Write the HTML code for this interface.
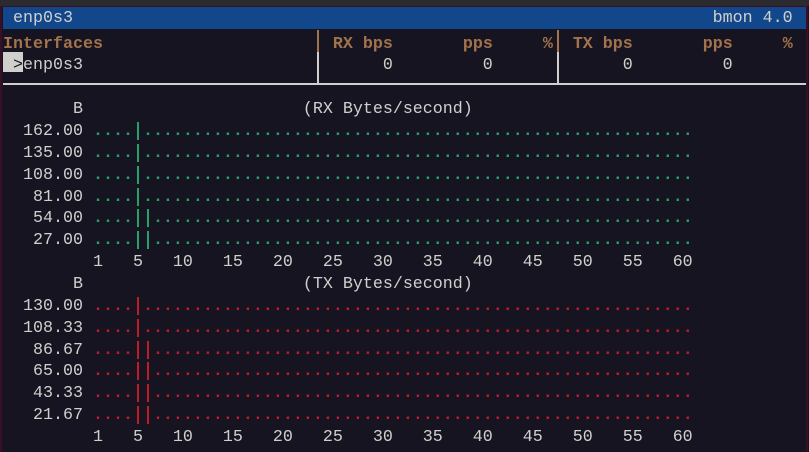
<!DOCTYPE html>
<html><head><meta charset="utf-8"><style>
html,body{margin:0;padding:0;}
body{width:809px;height:452px;background:#171421;position:relative;overflow:hidden;font-family:"Liberation Mono","DejaVu Sans Mono",monospace;font-size:16.67px;color:#d0cfcc;}
.top{position:absolute;left:0;top:0;width:809px;height:6px;background:#2b2a2e;}
.lb{position:absolute;left:0;top:6px;width:2px;height:446px;background:#3a0f25;}
.rb{position:absolute;left:806px;top:6px;width:2px;height:446px;background:#3a0f25;}
.tb{position:absolute;left:2px;top:6px;width:804px;height:1px;background:#3a0f25;}
.bar{position:absolute;left:3px;top:7px;width:803px;height:22px;background:#12488b;color:#d0cfcc;line-height:23px;white-space:pre;}
pre{position:absolute;left:3px;top:33.6px;margin:0;font:inherit;line-height:21.86px;white-space:pre;}
.o{color:#a2734c;font-weight:bold;}
.g{color:#26a269;font-weight:bold;}
.r{color:#c01c28;font-weight:bold;}
.sep{position:absolute;width:2px;}
.hl{position:absolute;left:3px;top:83px;width:803px;height:2px;background:#d0cfcc;}
.cur{position:absolute;left:3px;top:52px;width:20px;height:20px;background:#d0cfcc;}
.gb{position:absolute;width:2px;height:18px;background:#26a269;}
.rbar{position:absolute;width:2px;height:18px;background:#c01c28;}
</style></head><body>
<div class="top"></div><div class="tb"></div><div class="lb"></div><div class="rb"></div>
<div class="bar"> enp0s3                                                                bmon 4.0</div>
<div class="cur"></div>
<div class="sep" style="left:317px;top:30px;height:22px;background:#a2734c"></div>
<div class="sep" style="left:317px;top:52px;height:32px;background:#d0cfcc"></div>
<div class="sep" style="left:557px;top:30px;height:22px;background:#a2734c"></div>
<div class="sep" style="left:557px;top:52px;height:32px;background:#d0cfcc"></div>
<div class="hl"></div>
<pre><span class="o">Interfaces</span>                       <span class="o">RX bps</span>       <span class="o">pps</span>     <span class="o">%</span>  <span class="o">TX bps</span>       <span class="o">pps</span>     <span class="o">%</span>
 <span style="color:#171421">&gt;</span>enp0s3                              0         0             0         0

       B                      (RX Bytes/second)
  162.00 <span class="g">.... .......................................................</span>
  135.00 <span class="g">.... .......................................................</span>
  108.00 <span class="g">.... .......................................................</span>
   81.00 <span class="g">.... .......................................................</span>
   54.00 <span class="g">....  ......................................................</span>
   27.00 <span class="g">....  ......................................................</span>
         1   5   10   15   20   25   30   35   40   45   50   55   60
       B                      (TX Bytes/second)
  130.00 <span class="r">.... .......................................................</span>
  108.33 <span class="r">.... .......................................................</span>
   86.67 <span class="r">....  ......................................................</span>
   65.00 <span class="r">....  ......................................................</span>
   43.33 <span class="r">....  ......................................................</span>
   21.67 <span class="r">....  ......................................................</span>
         1   5   10   15   20   25   30   35   40   45   50   55   60
</pre>
<div class="gb" style="left:137px;top:122px"></div>
<div class="gb" style="left:137px;top:143.9px"></div>
<div class="gb" style="left:137px;top:165.7px"></div>
<div class="gb" style="left:137px;top:187.6px"></div>
<div class="gb" style="left:137px;top:209.4px"></div>
<div class="gb" style="left:147px;top:209.4px"></div>
<div class="gb" style="left:137px;top:231.3px"></div>
<div class="gb" style="left:147px;top:231.3px"></div>
<div class="rbar" style="left:137px;top:296.9px"></div>
<div class="rbar" style="left:137px;top:318.7px"></div>
<div class="rbar" style="left:137px;top:340.6px"></div>
<div class="rbar" style="left:147px;top:340.6px"></div>
<div class="rbar" style="left:137px;top:362.4px"></div>
<div class="rbar" style="left:147px;top:362.4px"></div>
<div class="rbar" style="left:137px;top:384.3px"></div>
<div class="rbar" style="left:147px;top:384.3px"></div>
<div class="rbar" style="left:137px;top:406.1px"></div>
<div class="rbar" style="left:147px;top:406.1px"></div>
</body></html>
